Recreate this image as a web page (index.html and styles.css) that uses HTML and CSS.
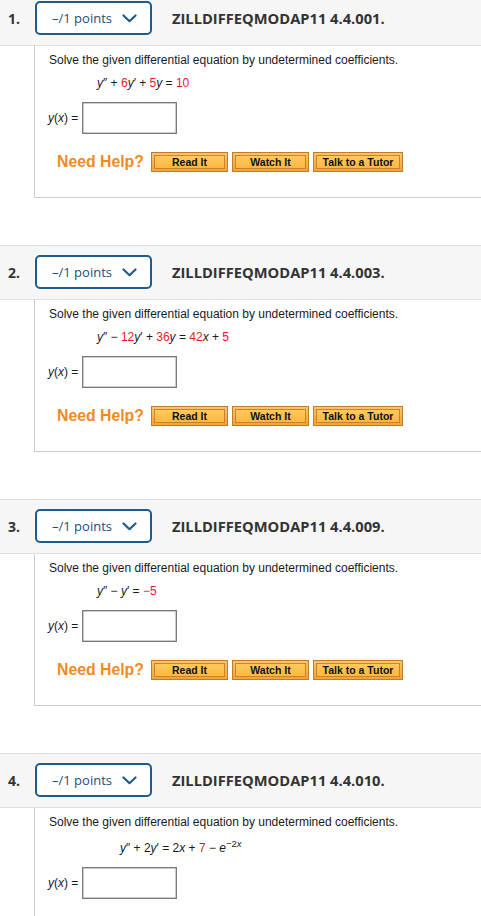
FILE: index.html
```
<!DOCTYPE html>
<html>
<head>
<meta charset="utf-8">
<link rel="stylesheet" href="styles.css">
</head>
<body>
<div class="page">

  <div class="question">
    <div class="q-header">
      <span class="q-num">1.</span>
      <button class="points">–/1 points <svg class="chev" width="15" height="9" viewBox="0 0 15 9"><polyline points="1.5,1.5 7.5,7.2 13.5,1.5" fill="none" stroke="#1d5c8b" stroke-width="2.2" stroke-linecap="round" stroke-linejoin="round"/></svg></button>
      <span class="q-title">ZILLDIFFEQMODAP11 4.4.001.</span>
    </div>
    <div class="q-body">
      <p class="prompt">Solve the given differential equation by undetermined coefficients.</p>
      <p class="eq"><i>y</i>″ + <span class="r">6</span><i>y</i>′ + <span class="r">5</span><i>y</i> = <span class="r">10</span></p>
      <div class="answer"><span class="lbl"><i>y</i>(<i>x</i>) =</span><span class="box"></span></div>
      <div class="help"><span class="need">Need Help?</span><span class="btn"><span>Read It</span></span><span class="btn"><span>Watch It</span></span><span class="btn wide"><span>Talk to a Tutor</span></span></div>
    </div>
  </div>

  <div class="question">
    <div class="q-header">
      <span class="q-num">2.</span>
      <button class="points">–/1 points <svg class="chev" width="15" height="9" viewBox="0 0 15 9"><polyline points="1.5,1.5 7.5,7.2 13.5,1.5" fill="none" stroke="#1d5c8b" stroke-width="2.2" stroke-linecap="round" stroke-linejoin="round"/></svg></button>
      <span class="q-title">ZILLDIFFEQMODAP11 4.4.003.</span>
    </div>
    <div class="q-body">
      <p class="prompt">Solve the given differential equation by undetermined coefficients.</p>
      <p class="eq"><i>y</i>″ − <span class="r">12</span><i>y</i>′ + <span class="r">36</span><i>y</i> = <span class="r">42</span><i>x</i> + <span class="r">5</span></p>
      <div class="answer"><span class="lbl"><i>y</i>(<i>x</i>) =</span><span class="box"></span></div>
      <div class="help"><span class="need">Need Help?</span><span class="btn"><span>Read It</span></span><span class="btn"><span>Watch It</span></span><span class="btn wide"><span>Talk to a Tutor</span></span></div>
    </div>
  </div>

  <div class="question">
    <div class="q-header">
      <span class="q-num">3.</span>
      <button class="points">–/1 points <svg class="chev" width="15" height="9" viewBox="0 0 15 9"><polyline points="1.5,1.5 7.5,7.2 13.5,1.5" fill="none" stroke="#1d5c8b" stroke-width="2.2" stroke-linecap="round" stroke-linejoin="round"/></svg></button>
      <span class="q-title">ZILLDIFFEQMODAP11 4.4.009.</span>
    </div>
    <div class="q-body">
      <p class="prompt">Solve the given differential equation by undetermined coefficients.</p>
      <p class="eq"><i>y</i>″ − <i>y</i>′ = <span class="r">−5</span></p>
      <div class="answer"><span class="lbl"><i>y</i>(<i>x</i>) =</span><span class="box"></span></div>
      <div class="help"><span class="need">Need Help?</span><span class="btn"><span>Read It</span></span><span class="btn"><span>Watch It</span></span><span class="btn wide"><span>Talk to a Tutor</span></span></div>
    </div>
  </div>

  <div class="question">
    <div class="q-header">
      <span class="q-num">4.</span>
      <button class="points">–/1 points <svg class="chev" width="15" height="9" viewBox="0 0 15 9"><polyline points="1.5,1.5 7.5,7.2 13.5,1.5" fill="none" stroke="#1d5c8b" stroke-width="2.2" stroke-linecap="round" stroke-linejoin="round"/></svg></button>
      <span class="q-title">ZILLDIFFEQMODAP11 4.4.010.</span>
    </div>
    <div class="q-body">
      <p class="prompt">Solve the given differential equation by undetermined coefficients.</p>
      <p class="eq eq-sup"><i>y</i>″ + 2<i>y</i>′ = 2<i>x</i> + <span class="r">7</span> − <i>e</i><sup>−2<i>x</i></sup></p>
      <div class="answer"><span class="lbl"><i>y</i>(<i>x</i>) =</span><span class="box"></span></div>
    </div>
  </div>

</div>
</body>
</html>
```

FILE: styles.css
```
html, body {
  margin: 0;
  padding: 0;
  background: #ffffff;
}

.page {
  margin-top: -9px;
  font-family: "Liberation Sans", Arial, sans-serif;
  color: #222;
}

.question {
  margin-bottom: 47px;
}

.q-header {
  display: flex;
  align-items: center;
  background: #f6f6f6;
  border-top: 1px solid #dedede;
  border-bottom: 1px solid #dedede;
  padding: 9px 0 10px 8px;
}

.q-num {
  width: 27px;
  font-family: "Open Sans", sans-serif;
  font-weight: 700;
  font-size: 14px;
  color: #333;
}

.points {
  box-sizing: border-box;
  width: 117px;
  height: 34px;
  display: flex;
  align-items: center;
  justify-content: center;
  gap: 10px;
  margin: 0;
  padding: 0 0 0 2px;
  background: #ffffff;
  border: 2px solid #1d5c8b;
  border-radius: 5px;
  font-family: "Open Sans", sans-serif;
  font-size: 13px;
  color: #1d4f78;
}

.chev {
  display: block;
  margin-top: 1px;
}

.q-title {
  margin-left: 20px;
  font-family: "Open Sans", sans-serif;
  font-weight: 700;
  font-size: 14.7px;
  color: #333;
}

.q-body {
  margin-left: 34px;
  border-left: 1px solid #cccccc;
  border-bottom: 1px solid #cccccc;
  padding: 7px 0 25px 14px;
}

.prompt {
  margin: 0;
  font-size: 12px;
  line-height: 14px;
  color: #1a1a1a;
}

.eq {
  margin: 9px 0 0 48px;
  font-size: 12px;
  line-height: 14px;
  color: #1a1a1a;
}

.eq-sup {
  margin-top: 12px;
  margin-left: 71px;
}

.eq sup {
  font-size: 9.5px;
  line-height: 0;
  vertical-align: 5px;
}

.r {
  color: #e8191f;
}

.answer {
  margin-top: 12px;
  display: flex;
  align-items: center;
  height: 32px;
}

.lbl {
  margin-left: -1px;
  font-size: 12px;
  color: #1a1a1a;
  width: 34px;
}

.box {
  box-sizing: border-box;
  width: 95px;
  height: 32px;
  border: 1px solid #7a7a7a;
  box-shadow: inset 0 0 0 0.5px #9a9a9a;
  background: #fff;
}

.help {
  margin-top: 18px;
  display: flex;
  align-items: center;
  height: 20px;
}

.need {
  margin-left: 8px;
  width: 94px;
  font-weight: 700;
  font-size: 15.8px;
  color: #f28a1f;
}

.btn {
  box-sizing: border-box;
  width: 77px;
  height: 20px;
  margin-right: 4px;
  padding: 2px;
  border: 1px solid #c47a2c;
  background: linear-gradient(#fcc46a, #f7a236);
  display: flex;
}

.btn.wide {
  width: 90px;
}

.btn span {
  flex: 1;
  display: flex;
  align-items: center;
  justify-content: center;
  border: 1px solid #c9822e;
  background: linear-gradient(#ffca5c, #fbb743);
  font-weight: 700;
  font-size: 10.5px;
  color: #111;
}
```
